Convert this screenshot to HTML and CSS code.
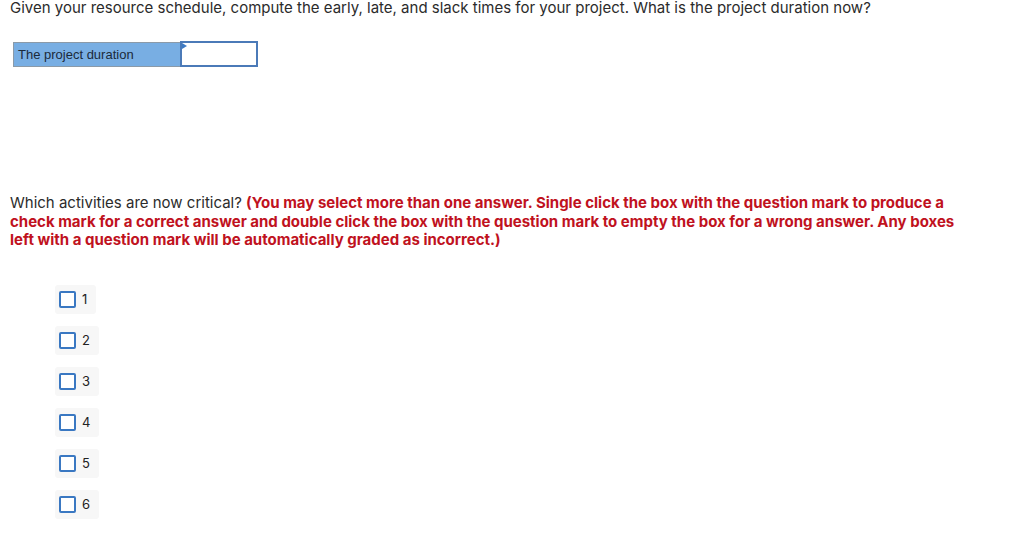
FILE: index.html
```html
<!DOCTYPE html>
<html>
<head>
<meta charset="utf-8">
<link rel="stylesheet" href="styles.css">
</head>
<body>
<p class="q">Given your resource schedule, compute the early, late, and slack times for your project. What is the project duration now?</p>
<table class="dur">
<tr><td class="lbl">The project duration</td><td class="inp"><span class="tri"></span></td></tr>
</table>
<p class="q2">Which activities are now critical? <b class="red">(You may select more than one answer. Single click the box with the question mark to produce a check mark for a correct answer and double click the box with the question mark to empty the box for a wrong answer. Any boxes left with a question mark will be automatically graded as incorrect.)</b></p>
<ul class="opts">
<li><span class="opt"><span class="box"></span><span class="n">1</span></span></li>
<li><span class="opt"><span class="box"></span><span class="n">2</span></span></li>
<li><span class="opt"><span class="box"></span><span class="n">3</span></span></li>
<li><span class="opt"><span class="box"></span><span class="n">4</span></span></li>
<li><span class="opt"><span class="box"></span><span class="n">5</span></span></li>
<li><span class="opt"><span class="box"></span><span class="n">6</span></span></li>
</ul>
</body>
</html>
```
FILE: styles.css
```css
html, body { margin: 0; padding: 0; background: #fff; }
body {
  font-family: Inter, "Open Sans", "Liberation Sans", sans-serif;
  font-size: 15px;
  color: #2b2b2b;
  padding: 0 10px;
}
.q { margin: 0; line-height: 16px; }
.dur {
  border-collapse: collapse;
  margin: 25px 0 0 3px;
}
.dur td { height: 22px; padding: 0; }
.lbl {
  width: 162px;
  background: #78aee3;
  border: 1px solid #8b9aa8;
  font-family: "Liberation Sans", Arial, sans-serif;
  font-size: 13px;
  color: #1b2a3a;
  padding: 0 0 0 4px !important;
}
.inp {
  width: 74px;
  border: 2px solid #4b7ab8;
  background: #fff;
  position: relative;
}
.tri {
  position: absolute;
  left: 0; top: 0;
  width: 0; height: 0;
  border-top: 3px solid transparent;
  border-bottom: 3px solid transparent;
  border-left: 5px solid #3d7ac4;
}
.q2 { margin: 127px 0 0 0; line-height: 18.5px; max-width: 960px; }
.red { color: #c0121e; font-weight: 700; }
.opts { list-style: none; margin: 35px 0 0 45px; padding: 0; display: flex; flex-direction: column; gap: 12px; }
.opts li { display: flex; }
.opt {
  display: flex; align-items: center; gap: 6px;
  background: #f7f7f7; border-radius: 3px;
  height: 29px; padding: 0 9px 0 4px;
}
.box {
  width: 13px; height: 13px;
  border: 2px solid #3a78c2; border-radius: 2px;
  background: #fff;
}
.n { font-size: 13px; color: #222; }
```
